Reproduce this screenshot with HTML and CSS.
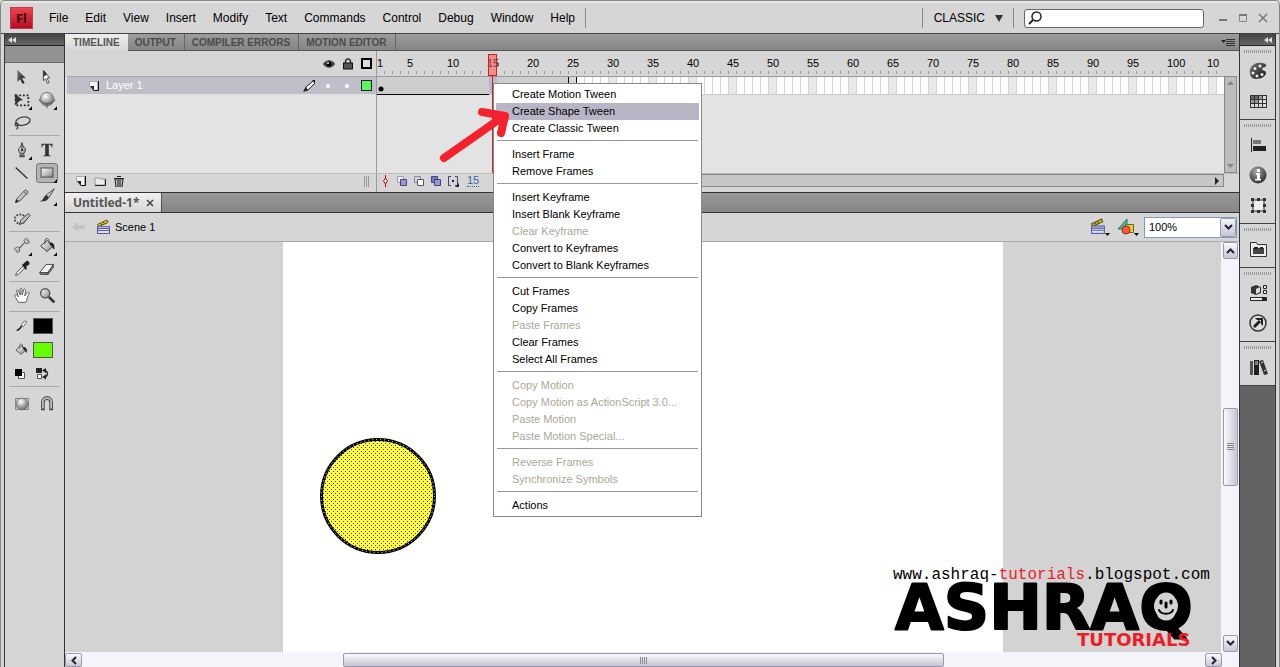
FILE: index.html
```html
<!DOCTYPE html>
<html lang="en">
<head>
<meta charset="utf-8">
<title>Untitled-1*</title>
<link rel="stylesheet" href="styles.css">
</head>
<body>
<svg class="defs" width="0" height="0" aria-hidden="true">
	<defs>
		<linearGradient id="dark" x1="0" y1="0" x2="1" y2="1"><stop offset="0" stop-color="#777"/><stop offset="1" stop-color="#111"/></linearGradient>
		<linearGradient id="light" x1="0" y1="0" x2="1" y2="1"><stop offset="0" stop-color="#fff"/><stop offset="1" stop-color="#888"/></linearGradient>
		<radialGradient id="ball" cx=".4" cy=".3" r=".8"><stop offset="0" stop-color="#fff"/><stop offset="1" stop-color="#555"/></radialGradient>
		<radialGradient id="info" cx=".4" cy=".3" r=".8"><stop offset="0" stop-color="#aaa"/><stop offset="1" stop-color="#222"/></radialGradient>
		<pattern id="dots" width="4" height="4" patternUnits="userSpaceOnUse"><rect width="4" height="4" fill="#ffff33"/><path d="M0 0h1v1h-1zM2 2h1v1h-1z" fill="#333"/></pattern>
		<symbol id="clapper" viewBox="0 0 16 16">
			<path d="M1.500 5.500L11 1l1 2.500-9 4z" fill="#d8c818" stroke="#5c5410"/>
			<path d="M4 4l2 2M7 3l1.500 2" stroke="#5c5410"/>
			<rect x="1.500" y="7.500" width="12" height="7" fill="#dfe2fb" stroke="#55589a"/>
			<path d="M2 9.500h11M2 11.500h11" stroke="#55589a"/>
			<path d="M2 8h11" stroke="#8a8dcc"/>
		</symbol>
		<symbol id="page" viewBox="0 0 12 12">
			<path d="M1.500 1.500h8v9H6L1.500 6.500z" fill="#f4f4f4" stroke="#aaa"/>
			<path d="M10.500 1v9.500H6" fill="none" stroke="#111"/>
			<path d="M2 6h4v5z" fill="#222"/>
		</symbol>
		<symbol id="collapse" viewBox="0 0 8 6"><path d="M4 0v6L0 3zM8 0v6L4 3z" fill="#ddd"/></symbol>
		<symbol id="bucket" viewBox="0 0 22 22">
			<path d="M4 11l7-6 7 6-7 6z" fill="url(#light)" stroke="#333"/>
			<path d="M9 9c-1-5 1-7 3-6s1 4 1 5" fill="none" stroke="#444"/>
			<path d="M14 7c4 0 6 3 5 8-2-1-2-4-5-5z" fill="#222"/>
		</symbol>
	</defs>
</svg>

<div class="app">
	<header class="topbar">
		<div class="logo">Fl</div>
		<nav class="menubar">
			<button>File</button>
			<button>Edit</button>
			<button>View</button>
			<button>Insert</button>
			<button>Modify</button>
			<button>Text</button>
			<button>Commands</button>
			<button>Control</button>
			<button>Debug</button>
			<button>Window</button>
			<button>Help</button>
		</nav>
		<button class="workspace">CLASSIC <svg width="8" height="7"><path d="M0 0h8L4 7z" fill="#333"/></svg></button>
		<label class="search">
			<svg width="14" height="14"><circle cx="8.500" cy="5.500" r="4.500" fill="none" stroke="#222" stroke-width="1.500"/><path d="M5 9l-4 4" stroke="#222" stroke-width="2"/></svg>
			<input type="text" aria-label="Search">
		</label>
		<div class="winbtns">
			<button aria-label="Minimize"><svg width="10" height="10"><path d="M1 7h8" stroke="#777" stroke-width="2"/></svg></button>
			<button aria-label="Maximize"><svg width="10" height="10"><path d="M1.500 2v6.500h7V2" fill="none" stroke="#888"/><path d="M1 2h8" stroke="#777" stroke-width="2"/></svg></button>
			<button aria-label="Close"><svg width="10" height="10"><path d="M1 1l8 8M9 1l-8 8" stroke="#777" stroke-width="1.500"/></svg></button>
		</div>
	</header>

	<div class="main">
		<!-- tools -->
		<aside class="tools">
			<div class="dockhead"><svg width="8" height="6"><use href="#collapse"/></svg></div>
			<div class="toolgrip"></div>
			<div class="group">
				<button aria-label="Selection"><svg viewBox="0 0 22 22"><path d="M6 3l9 9-4 .5 3 5-2.500 1-2.500-5-3 3z" fill="url(#dark)"/></svg></button>
				<button aria-label="Subselection"><svg viewBox="0 0 22 22"><path d="M7 4l7 8-3 .5 2.500 4.500-2 1-2-5-2.500 2z" fill="#fff" stroke="#444"/><path d="M7 3l4 5-4 3z" fill="#333"/></svg></button>
				<button aria-label="Free Transform"><svg viewBox="0 0 22 22"><rect x="4" y="6" width="14" height="11" fill="none" stroke="#222" stroke-width="2" stroke-dasharray="2 2"/><path d="M3 4l9 7-4 1-4 5z" fill="#333"/><path d="M22 18v4h-4z"/></svg></button>
				<button aria-label="3D Rotation"><svg viewBox="0 0 22 22"><path d="M2 11c5-3 13-3 18 0" fill="none" stroke="#777"/><circle cx="11" cy="10" r="7.500" fill="url(#ball)" stroke="#777"/><path d="M2 11c4 5 14 5 18 0M11 15v5" fill="none" stroke="#555"/><path d="M22 18v4h-4z"/></svg></button>
				<button aria-label="Lasso"><svg viewBox="0 0 22 22"><ellipse cx="12" cy="9" rx="8" ry="4.500" fill="none" stroke="#444" stroke-width="1.500" transform="rotate(-12 12 9)"/><path d="M5 11c-3 1-1 4 1 3s0-3-1-3M6 14c1 2 0 3-1 4" fill="none" stroke="#444" stroke-width="1.500"/></svg></button>
			</div>
			<div class="group">
				<button aria-label="Pen"><svg viewBox="0 0 22 22"><path d="M11 3c0 4 4 6 4 8l-2 4H9l-2-4c0-2 4-4 4-8z" fill="url(#light)" stroke="#333"/><path d="M11 4v7" stroke="#333"/><circle cx="11" cy="11" r="1"/><path d="M8 16h6v3H8z" fill="#555"/><path d="M22 18v4h-4z"/></svg></button>
				<button aria-label="Text"><svg viewBox="0 0 22 22"><path d="M5 4h12v4h-1c0-2-1-3-3-3v11c0 1 1 1 2 1v1H7v-1c1 0 2 0 2-1V5C7 5 6 6 6 8H5z" fill="#333"/></svg></button>
				<button aria-label="Line"><svg viewBox="0 0 22 22"><path d="M4 5l13 12" stroke="#333" stroke-width="1.500"/></svg></button>
				<button class="on" aria-label="Rectangle"><svg viewBox="0 0 22 22"><rect x="4.500" y="5.500" width="13" height="10" fill="url(#light)" stroke="#444"/><path d="M22 18v4h-4z"/></svg></button>
				<button aria-label="Pencil"><svg viewBox="0 0 22 22"><path d="M4 18l2-5 9-9 3 3-9 9z" fill="url(#light)" stroke="#444"/><path d="M4 18l1-3 2 2zM13 6l3 3" stroke="#333"/></svg></button>
				<button aria-label="Brush"><svg viewBox="0 0 22 22"><path d="M19 3l-9 7 3 3z" fill="url(#light)" stroke="#444"/><path d="M10 10l3 3c-2 4-5 4-10 4 4-1 4-5 7-7z" fill="#333"/><path d="M22 18v4h-4z"/></svg></button>
				<button aria-label="Deco"><svg viewBox="0 0 22 22"><ellipse cx="9" cy="11" rx="6" ry="5" fill="none" stroke="#444" stroke-width="2" stroke-dasharray="2 1.500"/><path d="M8 17l2-5 8-7 2 2-7 8z" fill="url(#light)" stroke="#333"/></svg></button>
			</div>
			<div class="group">
				<button aria-label="Bone"><svg viewBox="0 0 22 22"><path d="M15 3c2-1 3 1 2 2 2 0 3 2 1 3s-3 0-4-1l-6 7c1 2 0 4-2 4-1 0-1-1-1-2-2 0-3-2-1-3 1-1 3-1 4 0l6-6c-1-2-1-3 1-4z" fill="url(#light)" stroke="#555"/><path d="M22 18v4h-4z"/></svg></button>
				<button aria-label="Paint Bucket"><svg viewBox="0 0 22 22"><use href="#bucket"/><path d="M22 18v4h-4z"/></svg></button>
				<button aria-label="Eyedropper"><svg viewBox="0 0 22 22"><path d="M4 18l1-3 7-7 2 2-7 7z" fill="#eee" stroke="#444"/><path d="M11 6l2-1 3-3c2 0 4 2 3 4l-3 2v3l-1 1z" fill="#222"/></svg></button>
				<button aria-label="Eraser"><svg viewBox="0 0 22 22"><path d="M3 15l7-9h8l-6 9z" fill="#f4f4f4" stroke="#444"/><path d="M3 15h9v2H4zM12 15l6-9v3l-6 8z" fill="#888" stroke="#444"/></svg></button>
			</div>
			<div class="group view">
				<button aria-label="Hand"><svg viewBox="0 0 22 22"><path d="M7 18c-1-3-4-6-4-8 1-1 3 0 4 2L5 5c0-1 2-1 2 0l2 5V4c0-2 2-2 2 0v6l2-6c0-1 2-1 2 1l-1 6 3-4c1-1 2 0 2 1-2 3-2 7-4 10z" fill="#fff" stroke="#555"/></svg></button>
				<button aria-label="Zoom"><svg viewBox="0 0 22 22"><circle cx="9" cy="8" r="5" fill="url(#light)" stroke="#555" stroke-width="1.500"/><path d="M13 12l6 6" stroke="#333" stroke-width="3"/></svg></button>
			</div>
			<div class="group colors">
				<span><svg viewBox="0 0 22 22"><path d="M5 17c3 0 5-3 7-6" fill="none" stroke="#222" stroke-width="2"/><path d="M11 10l5-6 3 1-5 7z" fill="#fff" stroke="#444"/></svg></span>
				<button class="swatch stroke" aria-label="Stroke color"></button>
				<span><svg viewBox="0 0 22 22"><use href="#bucket"/></svg></span>
				<button class="swatch fill" aria-label="Fill color"></button>
				<button class="mini" aria-label="Black and white"><svg width="12" height="12"><path d="M4.500 4.500h6v6h-6z" fill="#fff" stroke="#555"/><path d="M1 1h7v7H1z"/></svg></button>
				<button class="mini" aria-label="Swap colors"><svg width="14" height="12"><path d="M0 0h6v5H0z" fill="#222"/><path d="M1.500 6.500h4v4h-4z" fill="#fff" stroke="#555"/><path d="M8 2.500c5 0 4 6.500 0 6.500" fill="none" stroke="#333" stroke-width="1.500"/><path d="M10 0v5L6 2.500zM10 6.500v5L6 9z" fill="#222"/></svg></button>
			</div>
			<div class="group options">
				<button aria-label="Object Drawing"><svg viewBox="0 0 22 22"><rect x="4" y="5" width="14" height="12" fill="none" stroke="#777"/><circle cx="11" cy="11" r="6.500" fill="url(#ball)" stroke="#777"/></svg></button>
				<button aria-label="Snap to Objects"><svg viewBox="0 0 22 22"><path d="M6.500 18V9c0-6 9-6 9 0v9" fill="none" stroke="#444" stroke-width="4"/><path d="M6.500 16V9c0-6 9-6 9 0v7" fill="none" stroke="#bbb" stroke-width="2"/></svg></button>
			</div>
		</aside>

		<div class="center">
			<!-- timeline -->
			<div class="tabs">
				<button class="active">TIMELINE</button>
				<button>OUTPUT</button>
				<button>COMPILER ERRORS</button>
				<button>MOTION EDITOR</button>
				<svg class="panelmenu" width="14" height="9"><path d="M0 2h5L2.500 5z" fill="#222"/><path d="M5 1.500h9M5 3.500h9M5 5.500h9M5 7.500h9" stroke="#333"/></svg>
			</div>
			<section class="timeline">
				<div class="layers">
					<div class="layerhead">
						<svg width="12" height="10"><path d="M0 5c3-5 9-5 12 0-3 5-9 5-12 0z" fill="#444"/><circle cx="6" cy="5" r="2.500"/><circle cx="5" cy="4" r="1" fill="#eee"/></svg>
						<svg width="10" height="12"><path d="M2.500 6V4c0-4 5-4 5 0v2" fill="none" stroke="#333" stroke-width="1.500"/><rect x=".5" y="5" width="9" height="6" fill="#555" stroke="#111"/></svg>
						<svg width="12" height="12"><rect x="1" y="1" width="9" height="9" fill="#ddd" stroke="#000" stroke-width="2"/></svg>
					</div>
					<div class="layer">
						<svg width="12" height="12"><use href="#page"/></svg>
						<span class="name">Layer 1</span>
						<svg width="14" height="14"><path d="M2 12l2-4 7-6 2 2-7 7z" fill="#fff" stroke="#222"/><path d="M1 13l3-5 2 3zM10 1l3 0v3z" fill="#222"/></svg>
						<i class="dot"></i>
						<i class="dot"></i>
						<i class="outline"></i>
					</div>
				</div>
				<div class="frames">
					<div class="ruler">
						<span class="first">1</span><span>5</span><span>10</span><span>15</span><span>20</span><span>25</span><span>30</span><span>35</span><span>40</span><span>45</span><span>50</span><span>55</span><span>60</span><span>65</span><span>70</span><span>75</span><span>80</span><span>85</span><span>90</span><span>95</span><span>100</span><span>10</span>
					</div>
					<div class="track">
						<span class="tween"><svg width="6" height="6"><circle cx="3" cy="3" r="2.500"/></svg></span>
						<span class="current"></span>
						<span class="static"></span>
						<span class="end"></span>
					</div>
					<div class="playhead"></div>
				</div>
				<div class="tlscroll">
					<svg width="7" height="4"><path d="M0 4h7L3.500 0z" fill="#888"/></svg>
					<svg width="7" height="4"><path d="M0 0h7L3.500 4z" fill="#888"/></svg>
				</div>
			</section>
			<div class="tlfoot">
				<div class="layerbtns">
					<button aria-label="New Layer"><svg width="12" height="12"><use href="#page"/></svg></button>
					<button aria-label="New Folder"><svg width="12" height="12"><path d="M1 3h4l1 1h5v6H1z" fill="#eee" stroke="#999"/><path d="M11.500 4v6.500H1" fill="none" stroke="#222"/></svg></button>
					<button aria-label="Delete"><svg width="12" height="12"><path d="M2 4h8l-1 8H3z" fill="#bbb" stroke="#222"/><path d="M1 3.500h10M4 1.500h4M5 5v6M7 5v6" stroke="#222"/></svg></button>
					<svg class="resize" width="6" height="11"><path d="M.5 0v11M2.500 0v11M4.500 0v11" stroke="#999"/></svg>
				</div>
				<div class="onion">
					<button aria-label="Center Frame"><svg width="12" height="12"><path d="M6.500 0v12" stroke="#c00"/><path d="M6.500 3l2 3-2 3-2-3z" fill="#fff" stroke="#c00"/></svg></button>
					<button aria-label="Onion Skin"><svg width="12" height="12"><path d="M1.500 1.500h6v6h-6z" fill="#eef" stroke="#99c"/><path d="M4.500 4.500h6v6h-6z" fill="#99c" stroke="#448"/></svg></button>
					<button aria-label="Onion Skin Outlines"><svg width="12" height="12"><path d="M1.500 1.500h6v6h-6z" fill="none" stroke="#88a"/><path d="M4.500 4.500h6v6h-6z" fill="#fff" stroke="#558"/></svg></button>
					<button aria-label="Edit Multiple Frames"><svg width="12" height="12"><path d="M1.500 1.500h6v6h-6z" fill="#77b" stroke="#448"/><path d="M4.500 4.500h6v6h-6z" fill="#99c" stroke="#448"/></svg></button>
					<button aria-label="Modify Onion Markers"><svg width="12" height="12"><path d="M4 1.500H1.500v9H4M8 1.500h2.500v9H8" fill="none" stroke="#446"/><path d="M5 5h2v2H5zM12 8v4H8z" fill="#224"/></svg></button>
					<a href="#">15</a>
				</div>
				<div class="tlhscroll"><svg width="4" height="8"><path d="M0 0v8l4-4z" fill="#222"/></svg></div>
			</div>

			<!-- document -->
			<div class="doctabs">
				<button>Untitled-1* <svg width="8" height="8"><path d="M1 1l6 6M7 1L1 7" stroke="#444" stroke-width="1.500"/></svg></button>
			</div>
			<div class="editbar">
				<svg width="14" height="12"><path d="M6 1v3h7v4H6v3L0 6z" fill="#c2c2c2"/></svg>
				<svg width="16" height="16"><use href="#clapper"/></svg>
				<span>Scene 1</span>
				<button class="scene" aria-label="Edit Scene"><svg width="20" height="18"><use href="#clapper" width="17" height="17"/><path d="M15 15h5l-2.500 3z"/></svg></button>
				<button aria-label="Edit Symbols"><svg width="22" height="18"><path d="M1 11L10 1v10z" fill="#4db8a0" stroke="#276"/><path d="M8.500 6.500h8v8h-8z" fill="#e8d020" stroke="#664"/><circle cx="9" cy="12" r="4" fill="#f06030" stroke="#922"/><path d="M17 15h5l-2.500 3z"/></svg></button>
				<div class="zoom">
					<select aria-label="Zoom"><option>100%</option></select>
					<span><svg width="9" height="6"><path d="M1 1l3.500 3.500L8 1" fill="none" stroke="#223" stroke-width="2"/></svg></span>
				</div>
			</div>
			<div class="work">
				<div class="pasteboard">
					<div class="stage">
						<svg class="ball" width="118" height="118"><circle cx="59" cy="59" r="56.500" fill="url(#dots)" stroke="#000" stroke-width="3"/><circle cx="59" cy="59" r="56.500" fill="none" stroke="#fff" stroke-dasharray="1 3"/></svg>
					</div>
				</div>
				<div class="vscroll">
					<button aria-label="Scroll up"><svg width="9" height="6"><path d="M1 5l3.500-3.500L8 5" fill="none" stroke="#223" stroke-width="2"/></svg></button>
					<div class="thumb"><svg width="7" height="8"><path d="M0 .5h7M0 2.500h7M0 4.500h7M0 6.500h7" stroke="#888"/></svg></div>
					<button aria-label="Scroll down"><svg width="9" height="6"><path d="M1 1l3.500 3.500L8 1" fill="none" stroke="#223" stroke-width="2"/></svg></button>
				</div>
			</div>
			<div class="hscroll">
				<button aria-label="Scroll left"><svg width="6" height="9"><path d="M5 1L1.500 4.500 5 8" fill="none" stroke="#223" stroke-width="2"/></svg></button>
				<div class="thumb"><svg width="8" height="7"><path d="M.5 0v7M2.500 0v7M4.500 0v7M6.500 0v7" stroke="#888"/></svg></div>
				<button aria-label="Scroll right"><svg width="6" height="9"><path d="M1 1l3.500 3.500L1 8" fill="none" stroke="#223" stroke-width="2"/></svg></button>
			</div>
		</div>

		<!-- collapsed panels -->
		<aside class="dock">
			<div class="dockhead"><svg width="8" height="6"><use href="#collapse"/></svg></div>
			<div class="dockgroup">
				<button aria-label="Color"><svg viewBox="0 0 20 20"><path d="M2 12C1 6 7 1 13 2c3 0 6 1 5 3s-4 1-4 3 4 1 4 4-5 6-10 6c-4 0-6-3-6-6z" fill="url(#dark)"/><g fill="#eee"><circle cx="5" cy="12" r="1.500"/><circle cx="7" cy="7.500" r="1.500"/><circle cx="12" cy="5" r="1.500"/><circle cx="9" cy="15" r="1.500"/><circle cx="14" cy="13.500" r="1.500"/></g></svg></button>
				<button aria-label="Swatches"><svg viewBox="0 0 20 20"><path d="M2 4h17v13H2z" fill="#333"/><path d="M3 5h3v3H3zM7 5h3v3H7z" fill="#666"/><path d="M11 5h3v3h-3zM3 9h3v3H3zM7 9h3v3H7z" fill="#999"/><path d="M15 5h3v3h-3zM11 9h3v3h-3zM15 9h3v3h-3zM3 13h3v3H3zM7 13h3v3H7zM11 13h3v3h-3zM15 13h3v3h-3z" fill="#ddd"/></svg></button>
			</div>
			<div class="dockgroup">
				<button aria-label="Align"><svg viewBox="0 0 20 20"><path d="M3.500 3v14" stroke="#222"/><path d="M5 5h8v4H5z" fill="#777"/><path d="M5 11h13v5H5z" fill="#222"/></svg></button>
				<button aria-label="Info"><svg viewBox="0 0 20 20"><circle cx="10" cy="10" r="8.500" fill="url(#info)"/><path d="M9 4h3v3H9zM8 8h4v6h1v1.500H7V14h2v-4H8z" fill="#fff"/></svg></button>
				<button aria-label="Transform"><svg viewBox="0 0 20 20"><path d="M5 5h11v11H5z" fill="#eee" stroke="#333"/><path d="M3 3h3v3H3zM9 3h3v3H9zM15 3h3v3h-3zM3 9h3v3H3zM15 9h3v3h-3zM3 15h3v3H3zM9 15h3v3H9zM15 15h3v3h-3z" fill="#333"/></svg></button>
			</div>
			<div class="dockgroup">
				<button aria-label="Library"><svg viewBox="0 0 20 20"><path d="M2.500 3.500h6l1 2h9v12h-16z" fill="#eee" stroke="#333"/><path d="M5 9h11v6H5z" fill="#444"/><path d="M6 8h4v2H6zM12 8h3v2h-3z" fill="#222"/></svg></button>
			</div>
			<div class="dockgroup">
				<button aria-label="Components"><svg viewBox="0 0 20 20"><path d="M3 4l5-2 5 2v6l-5 2-5-2z" fill="#333"/><path d="M8 6l4-2v5l-4 2z" fill="#ddd"/><path d="M15.500 2.500h3v3h-3zM15.500 7.500h3v3h-3zM2.500 14.500h16v3h-16z" fill="#eee" stroke="#222"/><path d="M14 15h5v3h-5z" fill="#222"/></svg></button>
				<button aria-label="Component Inspector"><svg viewBox="0 0 20 20"><circle cx="10" cy="10" r="8" fill="#ddd" stroke="#333" stroke-width="1.500"/><path d="M6 14l6-6" stroke="#222" stroke-width="3"/><path d="M7 5h8v8l-2-2V7H9z" fill="#222"/></svg></button>
			</div>
			<div class="dockgroup">
				<button aria-label="Books"><svg viewBox="0 0 20 20"><path d="M2 4h3v14H2z" fill="#555"/><path d="M6 3h5v15H6z" fill="#222"/><path d="M7 5h3M7 7h3" stroke="#ddd"/><path d="M11 4l4-1 5 14-4 1z" fill="#333"/><path d="M13 6l2-1M16 14l2-1" stroke="#ddd"/></svg></button>
			</div>
		</aside>
	</div>

	<ul class="contextmenu">
		<li><button>Create Motion Tween</button></li>
		<li><button class="hover">Create Shape Tween</button></li>
		<li><button>Create Classic Tween</button></li>
		<li class="sep"></li>
		<li><button>Insert Frame</button></li>
		<li><button>Remove Frames</button></li>
		<li class="sep"></li>
		<li><button>Insert Keyframe</button></li>
		<li><button>Insert Blank Keyframe</button></li>
		<li><button disabled>Clear Keyframe</button></li>
		<li><button>Convert to Keyframes</button></li>
		<li><button>Convert to Blank Keyframes</button></li>
		<li class="sep"></li>
		<li><button>Cut Frames</button></li>
		<li><button>Copy Frames</button></li>
		<li><button disabled>Paste Frames</button></li>
		<li><button>Clear Frames</button></li>
		<li><button>Select All Frames</button></li>
		<li class="sep"></li>
		<li><button disabled>Copy Motion</button></li>
		<li><button disabled>Copy Motion as ActionScript 3.0...</button></li>
		<li><button disabled>Paste Motion</button></li>
		<li><button disabled>Paste Motion Special...</button></li>
		<li class="sep"></li>
		<li><button disabled>Reverse Frames</button></li>
		<li><button disabled>Synchronize Symbols</button></li>
		<li class="sep"></li>
		<li><button>Actions</button></li>
	</ul>
	<svg class="arrow" width="76" height="62"><path d="M9 54L66 14M47 8l23 4-4 17" fill="none" stroke="#f5222d" stroke-width="8" stroke-linecap="round" stroke-linejoin="round"/></svg>
	<svg class="watermark" width="330" height="86">
		<text class="url" x="4" y="15">www.ashraq-<tspan>tutorials</tspan>.blogspot.com</text>
		<text class="big" x="6" y="65">ASHRAQ</text>
		<circle cx="277" cy="42" r="12" fill="#d3d3d3"/>
		<path d="M272 37v2M282 37v2M277 39v4" stroke="#000" stroke-width="3" stroke-linecap="round"/>
		<path d="M270 46c2 5 12 5 14 0" fill="none" stroke="#000" stroke-width="2" stroke-linecap="round"/>
		<text class="small" x="188" y="82">TUTORIALS</text>
	</svg>
</div>
</body>
</html>
```

FILE: styles.css
```css
*{margin:0;padding:0;box-sizing:border-box;}
body{font:11px/17px "Liberation Sans",Arial,sans-serif;color:#000;background:#d6d6d6;overflow:hidden;}
button,input,select{font:inherit;color:inherit;background:none;border:0;}
button{display:flex;align-items:center;justify-content:center;}
svg{display:block;flex:none;}
ul{list-style:none;}
.defs{position:absolute;}
.app{position:relative;height:100vh;display:flex;flex-direction:column;border:1px solid #888;border-bottom:0;border-radius:5px 5px 0 0;background:#d6d6d6;overflow:hidden;}

/* top bar */
.topbar{display:flex;align-items:center;height:32px;padding:0 10px 0 9px;border-top:2px solid #e8e8e8;font-size:12px;}
.logo{width:23px;height:22px;background:linear-gradient(#ee4350,#b80c24);border:1px solid #c8384a;color:#3a0008;font:bold 13px/20px "Open Sans",sans-serif;text-align:center;}
.menubar{display:flex;gap:17px;padding:0 10px 0 16px;border-right:1px solid #888;line-height:20px;margin-right:auto;}
.workspace{gap:10px;height:20px;padding:0 10px 0 11px;border:solid #888;border-width:0 1px;}
.search{display:flex;align-items:center;width:180px;height:19px;margin:0 14px 0 10px;padding:0 3px;background:#fff;border:1px solid #666;border-radius:3px;}
.search input{flex:1;min-width:0;outline:0;}
.winbtns{display:flex;gap:10px;padding-right:1px;}

.main{flex:1;min-height:0;display:flex;padding:0 3px;border-top:1px solid #444;}
.dockhead{height:12px;padding:3px;background:linear-gradient(#444,#666);border-bottom:1px solid #222;}

/* tools */
.tools{width:61px;border:solid #333;border-width:0 1px;background:#d6d6d6;}
.toolgrip{height:17px;background:#929292;border-bottom:1px solid #666;}
.group{display:grid;grid-template-columns:25px 25px;grid-auto-rows:23px;justify-items:center;align-items:center;margin:0 4px;padding:2px 0 1px;border-bottom:1px solid #aaa;}
.group svg{width:20px;height:20px;}
.group .on{width:22px;height:20px;background:#b4b4b4;border:1px solid #777;border-radius:3px;}
.group.view{padding-bottom:4px;}
.group.colors{grid-template-columns:24px 20px;grid-auto-rows:24px;padding-bottom:0;}
.group.colors span svg{width:16px;height:16px;}
.group.options{padding-top:5px;border:0;}
.swatch{width:20px;height:16px;border:1px solid #555;}
.stroke{background:#000;}
.fill{background:#66ff00;}
.group .mini svg{width:14px;height:12px;}

/* timeline */
.center{flex:1;min-width:0;display:flex;flex-direction:column;}
.tabs{display:flex;height:17px;background:linear-gradient(#9c9c9c,#858585);border-bottom:1px solid #555;}
.tabs button{padding:0 8px 0 7px;border-right:1px solid #666;color:#4a4a4a;font-size:10px;font-weight:bold;}
.tabs .active{background:linear-gradient(#eee,#d6d6d6);color:#555;border:0;padding:0 8px;margin-bottom:-1px;}
.panelmenu{margin:4px 4px 0 auto;}
.timeline{display:flex;height:123px;border-bottom:1px solid #bbb;background:#d6d6d6;}
.layers{width:312px;padding-left:2px;display:flex;flex-direction:column;border-right:1px solid #999;background:linear-gradient(#d6d6d6 26px,#e3e3e3 26px);}
.layerhead{display:flex;align-items:center;justify-content:flex-end;gap:8px;height:26px;padding-right:3px;border-bottom:1px solid #aaa;}
.layer{display:flex;align-items:center;height:17px;padding:0 4px 0 21px;background:#bfbfc9;color:#fff;}
.layer .name{flex:1;padding-left:6px;}
.dot{width:4px;height:4px;margin-left:10px;border-radius:50%;background:#fff;}
.dot + .dot{margin-left:15px;}
.outline{width:11px;height:11px;margin-left:12px;background:#5cf55c;border:1px solid #222;}
.frames{position:relative;flex:1;min-width:0;background:#e3e3e3;overflow:hidden;}
.ruler{display:flex;height:26px;padding-top:4px;overflow:hidden;border-bottom:1px solid #999;background:repeating-linear-gradient(90deg,transparent 0 7px,#999 7px 8px) 0 20px/100% 3px no-repeat,#d6d6d6;}
.ruler span{flex:none;width:40px;}
.ruler .first{width:30px;}
.track{display:flex;height:18px;border-bottom:1px solid #ccc;background:repeating-linear-gradient(90deg,transparent 0 7px,#d4d4d4 7px 8px),repeating-linear-gradient(90deg,#fff 0 32px,#e8e8e8 32px 40px);}
.tween{display:flex;align-items:flex-end;width:112px;height:18px;padding:0 0 2px 1px;background:#cdcdcd;border-bottom:1px solid #000;}
.current{width:8px;background:#b8b8d0;}
.static{width:72px;background:#cdcdcd;border-right:1px solid #000;}
.end{width:8px;background:#d8d8d8;border-right:1px solid #000;}
.playhead{position:absolute;left:111px;top:3px;width:9px;height:22px;background:rgba(255,90,90,.6);border:1px solid #c22;}
.playhead:after{content:"";position:absolute;left:3px;top:21px;height:100px;border-left:1px solid #c22;}
.tlscroll{display:flex;flex-direction:column;justify-content:space-between;align-items:center;width:13px;margin:25px 2px 0 0;padding:4px 0;background:#bdbdbd;border:1px solid #888;}
.tlfoot{display:flex;height:19px;border-bottom:1px solid #333;}
.layerbtns{display:flex;align-items:center;gap:7px;width:312px;padding:0 6px 4px 10px;border-right:1px solid #999;}
.resize{margin-left:auto;}
.onion{display:flex;align-items:center;gap:5px;padding:0 40px 4px 2px;}
.onion a{margin-left:3px;color:#3568a8;line-height:11px;text-decoration:none;border-bottom:1px dotted #3568a8;}
.tlhscroll{display:flex;flex:1;height:13px;margin-right:15px;padding-right:4px;align-items:center;justify-content:flex-end;background:#c6c6c6;border:1px solid #888;}

/* document */
.doctabs{display:flex;height:20px;background:linear-gradient(#999,#858585);border-bottom:1px solid #333;}
.doctabs button{gap:7px;padding:0 7px 0 8px;background:linear-gradient(#f0f0f0,#d6d6d6);border-right:1px solid #555;color:#555;font:bold 12px/17px "Noto Sans",sans-serif;}
.editbar{display:flex;align-items:center;height:29px;padding:0 2px 0 7px;border-bottom:1px solid #aaa;}
.editbar > span{padding-left:3px;}
.editbar > svg + svg{margin-left:10px;}
.editbar .scene{margin:0 7px 0 auto;}
.zoom{display:flex;width:93px;height:21px;margin-left:5px;background:#fff;border:1px solid #7f9db9;position:relative;}
.zoom select{flex:1;padding-left:4px;appearance:none;outline:0;}
.zoom span{position:absolute;right:0;top:0;width:16px;height:19px;display:flex;align-items:center;justify-content:center;background:linear-gradient(#f4f4fa,#c4c4d4);border:1px solid #99a;border-radius:2px;pointer-events:none;}
.work{flex:1;min-height:0;display:flex;}
.pasteboard{flex:1;min-width:0;background:#d3d3d3;}
.stage{position:relative;width:720px;height:100%;margin:0 auto;background:#fff;}
.ball{position:absolute;left:36px;top:195px;}
.vscroll,.hscroll{display:flex;background:#f4f4fb;}
.vscroll{flex-direction:column;width:18px;padding:0 1px 0 2px;}
.vscroll button{height:17px;}
.hscroll{height:15px;padding:1px 17px 0 0;}
.hscroll button{width:17px;}
.vscroll button,.hscroll button,.thumb{background:linear-gradient(#fafafe,#c6c6d6);border:1px solid #99a;border-radius:2px;}
.thumb{display:flex;align-items:center;justify-content:center;margin:auto;}
.vscroll .thumb{width:100%;height:19%;background:linear-gradient(90deg,#fafafe,#c6c6d6);}
.hscroll .thumb{width:52%;height:100%;}

/* dock */
.dock{width:37px;border:solid #333;border-width:0 1px;background:#636363;}
.dock .dockhead{display:flex;justify-content:flex-end;}
.dockgroup{padding:10px 0 3px;border-bottom:1px solid #444;background:repeating-linear-gradient(90deg,#999 0 1px,transparent 1px 2px) 4px 4px/27px 3px no-repeat,#d6d6d6;}
.dockgroup button{width:35px;height:30px;}
.dockgroup svg{width:20px;height:20px;}

/* things floating above the panels */
.contextmenu{position:absolute;left:492px;top:82px;width:209px;padding:2px;background:#fff;border:1px solid #8a8a8a;}
.contextmenu button{justify-content:flex-start;width:100%;height:17px;padding-left:16px;}
.contextmenu .hover{background:#b8b5c6;}
.contextmenu button:disabled{color:#aca899;}
.sep{height:9px;padding:3px 1px;}
.sep:after{content:"";display:block;border-top:1px solid #999;}
.arrow{position:absolute;left:434px;top:103px;}
.watermark{position:absolute;right:60px;bottom:17px;}
.url{font:16px "Liberation Mono",monospace;}
.url tspan,.small{fill:#ee1c25;}
.big{font:bold 63px "DejaVu Sans",sans-serif;stroke:#000;stroke-width:2px;stroke-linejoin:round;}
.small{font:bold 18px "DejaVu Sans",sans-serif;}
```
